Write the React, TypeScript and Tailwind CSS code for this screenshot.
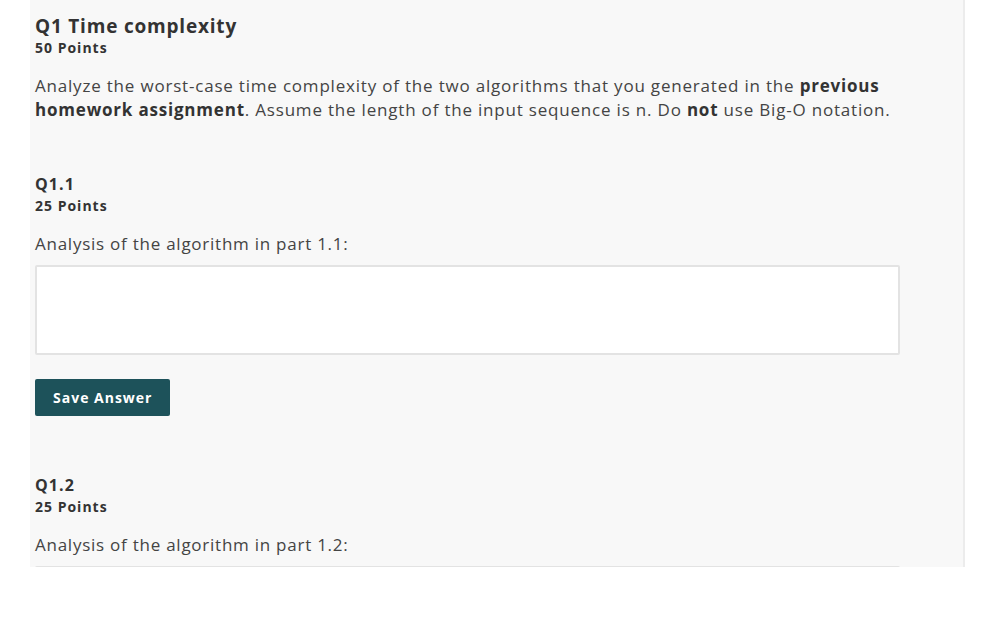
import React from 'react';

function Question({ id, points, prompt }: { id: string; points: string; prompt: string }) {
  return (
    <div>
      <div className="text-[16px] font-bold leading-[22px] tracking-[1.1px] text-[#333]">{id}</div>
      <div className="text-[14px] font-bold leading-[22px] tracking-[1px] text-[#333]">{points}</div>
      <p className="mt-[15px] text-[17px] leading-[24px] tracking-[0.75px] text-[#444]">{prompt}</p>
      <textarea className="mt-[9px] block h-[90px] w-[865px] resize-none rounded-[2px] border-2 border-[#e3e3e3] bg-white" />
    </div>
  );
}

export default function App() {
  return (
    <div className="h-[620px] w-[990px] bg-white" style={{ fontFamily: '"Open Sans", "Noto Sans", sans-serif' }}>
      <div className="ml-[30px] h-[567px] w-[935px] overflow-hidden border-r-2 border-[#ececec] bg-[#f8f8f8] pl-[5px]">
        <div className="pt-[14px]">
          <h1 className="text-[19px] font-bold leading-[24px] tracking-[0.8px] text-[#333]">Q1 Time complexity</h1>
          <div className="text-[14px] font-bold leading-[20px] tracking-[1px] text-[#333]">50 Points</div>
          <p className="mt-[16px] w-[905px] text-[17px] leading-[24px] tracking-[0.8px] text-[#444]">
            Analyze the worst-case time complexity of the two algorithms that you generated in the{' '}
            <strong className="font-bold text-[#333]">previous homework assignment</strong>. Assume the length of the input
            sequence is n. Do <strong className="font-bold text-[#333]">not</strong> use Big-O notation.
          </p>
        </div>

        <div className="mt-[51px]">
          <Question id="Q1.1" points="25 Points" prompt="Analysis of the algorithm in part 1.1:" />
          <button className="mt-[24px] h-[37px] rounded-[2px] bg-[#1d525a] px-[18px] text-[14px] font-bold tracking-[1px] text-white">
            Save Answer
          </button>
        </div>

        <div className="mt-[58px]">
          <Question id="Q1.2" points="25 Points" prompt="Analysis of the algorithm in part 1.2:" />
        </div>
      </div>
    </div>
  );
}
